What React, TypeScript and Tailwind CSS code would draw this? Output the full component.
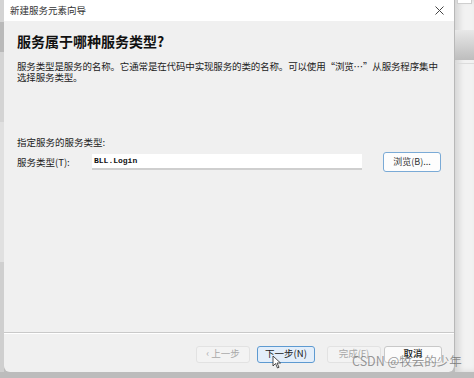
const cjk = "font-['Noto_Sans_CJK_SC','Noto_Sans',sans-serif]";

function Btn({ label, kind, w }: { label: string; kind: "default" | "disabled" | "primary"; w: string }) {
  const style =
    kind === "primary"
      ? "border-[#5d9ad1] bg-[#e3eefa] text-[#1a1a1a]"
      : kind === "disabled"
        ? "border-[#e2e2e2] bg-[#f3f3f3] text-[#a8a8a8]"
        : "border-[#c8c8c8] bg-[#fbfbfb] text-[#1a1a1a] font-medium";
  return (
    <div className={`flex h-[17px] ${w} items-center justify-center rounded-[3px] border ${style} text-[9.5px] leading-none`}>
      {label}
    </div>
  );
}

export default function App() {
  return (
    <div className={`relative flex h-[378px] w-[474px] flex-col overflow-hidden bg-[#bdbdbd] ${cjk}`}>
      <div className="flex h-[372px]">
        <div className="flex w-[4px] flex-col bg-[#d4d4d4]">
          <div className="h-[22px]" />
          <div className="h-[30px] bg-[#b9b9b9]" />
          <div className="h-[70px]" />
          <div className="h-[140px] bg-[#e0e0e0]" />
          <div className="flex-1 bg-[#cfcfcf]" />
        </div>

        <div className="flex w-[451px] flex-col overflow-hidden rounded-b-[6px] border-r border-[#b8b8b8] bg-[#f0f0f0]">
          <div className="flex h-[21px] items-center justify-between bg-white pl-[6px] pr-[10px]">
            <span className="text-[9.5px] text-[#333]">新建服务元素向导</span>
            <svg width="9" height="9" viewBox="0 0 9 9" className="text-[#444]">
              <path d="M0.5 0.5 L8.5 8.5 M8.5 0.5 L0.5 8.5" stroke="currentColor" strokeWidth="1" />
            </svg>
          </div>

          <div className="flex flex-1 flex-col px-[13px] pt-[12px]">
            <h1 className="text-[14px] font-bold leading-[16px] text-[#111]">服务属于哪种服务类型?</h1>
            <p className="mt-[12px] whitespace-nowrap text-[9.5px] leading-[11px] tracking-[-0.15px] text-[#222]">
              服务类型是服务的名称。它通常是在代码中实现服务的类的名称。可以使用“浏览…”从服务程序集中
              <br />
              选择服务类型。
            </p>

            <p className="mt-[53px] text-[9.5px] leading-[12px] text-[#222]">指定服务的服务类型:</p>
            <div className="mt-[4px] flex items-center">
              <span className="w-[75px] text-[9.5px] text-[#222]">服务类型(T):</span>
              <div className="flex h-[16px] w-[270px] items-center border-b-2 border-[#cfcfcf] bg-white pl-[2px] font-['Liberation_Mono',monospace] text-[8px] font-bold text-[#111]">
                BLL.Login
              </div>
              <div className="ml-[21px] flex h-[20px] w-[58px] items-center justify-center rounded-[3px] border border-[#7aaad6] bg-[#fdfdfd] text-[9px] text-[#333]">
                浏览(B)...
              </div>
            </div>
          </div>

          <div className="h-[2px] border-t border-[#c9c9c9] bg-white" />
          <div className="relative flex h-[38px] items-center justify-end pr-[12px] pt-[2px]">
            <Btn label="‹ 上一步" kind="disabled" w="w-[54px]" />
            <div className="ml-[7px]">
              <Btn label="下一步(N)" kind="primary" w="w-[58px]" />
            </div>
            <div className="ml-[12px]">
              <Btn label="完成(F)" kind="disabled" w="w-[54px]" />
            </div>
            <div className="ml-[3px]">
              <Btn label="取消" kind="default" w="w-[58px]" />
            </div>
            <svg width="10" height="14" viewBox="0 0 10 14" className="absolute left-[268px] top-[21px]">
              <path d="M1 1 L1 11 L3.5 8.5 L5.5 13 L7 12.3 L5 8 L8.5 8 Z" fill="white" stroke="#222" strokeWidth="0.8" />
            </svg>
          </div>
        </div>

        <div className="flex flex-1 flex-col bg-[#f2f2f2] shadow-[inset_4px_0_6px_rgba(0,0,0,0.12)]">
          <div className="mx-[2px] h-[4px] border border-t-0 border-[#cfcfcf] bg-white" />
          <div className="h-[26px]" />
          <div className="h-[30px] bg-[linear-gradient(180deg,#e8e8e8,#bdbdbd)]" />
          <div className="h-[4px] border-b border-[#dcdcdc]" />
          <div className="flex-1" />
        </div>
      </div>
      <div className="h-[6px] bg-[#bcbcbc]" />

      <span className="pointer-events-none absolute left-[352px] top-[353px] text-[12.5px] leading-[16px] text-[rgba(70,70,70,0.55)] font-['Noto_Sans_CJK_SC',sans-serif]">
        CSDN @牧云的少年
      </span>
    </div>
  );
}
